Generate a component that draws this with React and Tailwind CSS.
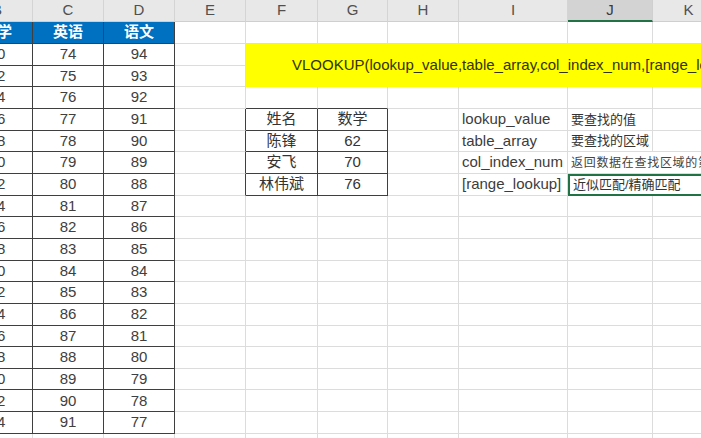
import React from "react";

const COLS = ["B", "C", "D", "E", "F", "G", "H", "I", "J", "K"];

const B_VALS = ["数学"];
const C_VALS = ["英语"];
const D_VALS = ["语文"];
for (let i = 0; i < 18; i++) {
  B_VALS.push(String(60 + i * 2));
  C_VALS.push(String(74 + i));
  D_VALS.push(String(94 - i));
}

const SMALL = {
  5: ["姓名", "数学"],
  6: ["陈锋", "62"],
  7: ["安飞", "70"],
  8: ["林伟斌", "76"],
};

const LABELS = {
  5: ["lookup_value", "要查找的值"],
  6: ["table_array", "要查找的区域"],
  7: ["col_index_num", "返回数据在查找区域的第几列"],
  8: ["[range_lookup]", "近似匹配/精确匹配"],
};

function Cell({ r, c }) {
  const inData = c <= 2 && r <= 19;
  const inSmall = (c === 4 || c === 5) && r >= 5 && r <= 8;
  const rDark = inData || inSmall || (c === 3 && r >= 5 && r <= 8);
  const bDark = inData || inSmall || ((c === 4 || c === 5) && r === 4);

  const rCls = rDark ? "border-r-[#3f3f3f]" : "border-r-[#dcdcdc]";
  const bCls = bDark ? "border-b-[#3f3f3f]" : "border-b-[#dcdcdc]";
  const base = "flex items-center overflow-hidden whitespace-nowrap border-r border-b " + rCls + " " + bCls;

  if (inData) {
    const vals = c === 0 ? B_VALS : c === 1 ? C_VALS : D_VALS;
    const v = vals[r - 1];
    if (r === 1) {
      return (
        <div className={base + " justify-center bg-[#0070c0] text-white font-bold text-[15px]"}>
          {v}
        </div>
      );
    }
    return <div className={base + " justify-center text-[#404040] text-[15px]"}>{v}</div>;
  }

  if (inSmall) {
    return <div className={base + " justify-center text-[#333333] text-[15px]"}>{SMALL[r][c - 4]}</div>;
  }

  if (c === 7 && LABELS[r]) {
    return <div className={base + " justify-start pl-[3px] text-[#3c3c3c] text-[15px]"}>{LABELS[r][0]}</div>;
  }

  return <div className={base} />;
}

export default function App() {
  const cells = [];
  for (let r = 1; r <= 20; r++) {
    for (let c = 0; c < 10; c++) {
      const key = r + "-" + c;
      // yellow merged F2:K3
      if ((r === 2 || r === 3) && c >= 4) {
        if (r === 2 && c === 4) {
          cells.push(
            <div
              key={key}
              className="col-span-6 row-span-2 flex items-center whitespace-nowrap overflow-hidden bg-[#ffff00] pl-[46px] text-[15px] text-[#333300]"
            >
              VLOOKUP(lookup_value,table_array,col_index_num,[range_lookup])
            </div>
          );
        }
        continue;
      }
      if ((r === 5 || r === 6) && c === 8) {
        cells.push(
          <div
            key={key}
            className="flex items-center overflow-hidden whitespace-nowrap border-r border-b border-r-[#dcdcdc] border-b-[#dcdcdc] pl-[3px] text-[13px] text-[#333333]"
          >
            {LABELS[r][1]}
          </div>
        );
        continue;
      }
      if (r === 7 && c === 8) {
        cells.push(
          <div
            key={key}
            className="col-span-2 flex items-center overflow-hidden whitespace-nowrap border-r border-b border-r-[#dcdcdc] border-b-[#dcdcdc] pl-[3px] text-[12px] tracking-[0.7px] text-[#444444]"
          >
            {LABELS[7][1]}
          </div>
        );
        continue;
      }
      if (r === 8 && c === 8) {
        cells.push(
          <div
            key={key}
            className="col-span-2 flex items-center overflow-hidden whitespace-nowrap border-2 border-[#217346] pl-[3px] text-[13px] text-[#333333]"
          >
            {LABELS[8][1]}
          </div>
        );
        continue;
      }
      if ((r === 7 || r === 8) && c === 9) continue;
      cells.push(<Cell key={key} r={r} c={c} />);
    }
  }

  return (
    <div className="w-[701px] h-[438px] overflow-hidden bg-white font-['Liberation_Sans','Noto_Sans_CJK_SC',sans-serif]">
      <div className="ml-[-38px] grid w-max grid-cols-[71px_71px_71px_71px_72px_70px_71px_109px_85px_72px] grid-rows-[22.33px_repeat(20,21.67px)]">
        {COLS.map((l, i) =>
          l === "J" ? (
            <div
              key={l}
              className="flex items-center justify-center border-r border-b-2 border-r-[#cfcfcf] border-b-[#217346] bg-[#d3d3d3] text-[15px] text-[#3a3a3a]"
            >
              {l}
            </div>
          ) : (
            <div
              key={l}
              className="flex items-center justify-center border-r border-b border-r-[#d4d4d4] border-b-[#cfcfcf] bg-[#e8e8e8] text-[15px] text-[#505050]"
            >
              {l}
            </div>
          )
        )}
        {cells}
      </div>
    </div>
  );
}
